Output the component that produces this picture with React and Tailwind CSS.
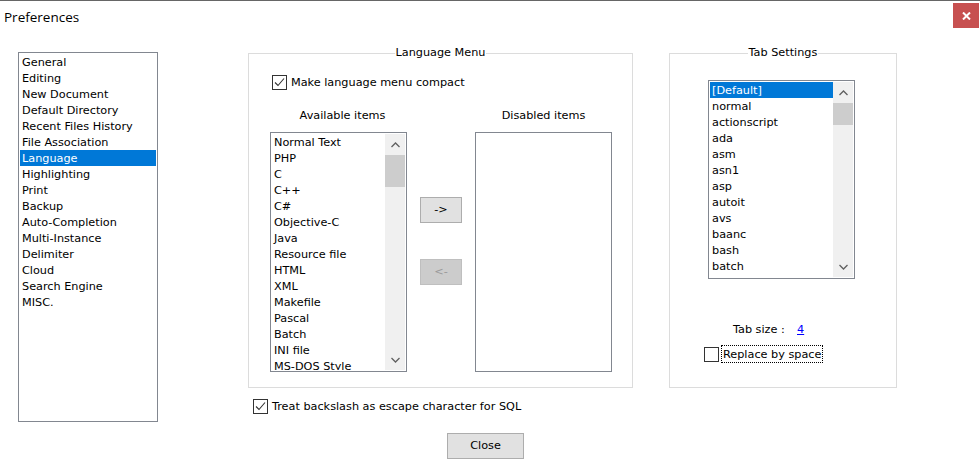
import React from "react";

const prefItems = [
  "General",
  "Editing",
  "New Document",
  "Default Directory",
  "Recent Files History",
  "File Association",
  "Language",
  "Highlighting",
  "Print",
  "Backup",
  "Auto-Completion",
  "Multi-Instance",
  "Delimiter",
  "Cloud",
  "Search Engine",
  "MISC.",
];

const langItems = [
  "Normal Text",
  "PHP",
  "C",
  "C++",
  "C#",
  "Objective-C",
  "Java",
  "Resource file",
  "HTML",
  "XML",
  "Makefile",
  "Pascal",
  "Batch",
  "INI file",
  "MS-DOS Style",
];

const tabItems = [
  "[Default]",
  "normal",
  "actionscript",
  "ada",
  "asm",
  "asn1",
  "asp",
  "autoit",
  "avs",
  "baanc",
  "bash",
  "batch",
  "blitzbasic",
];

function Chevron({ up }) {
  return (
    <svg width="9" height="6" viewBox="0 0 9 6" fill="none" stroke="#606060" strokeWidth="1.3">
      {up ? <polyline points="0.5 5 4.5 1 8.5 5" /> : <polyline points="0.5 1 4.5 5 8.5 1" />}
    </svg>
  );
}

function ScrollBar({ thumb }) {
  return (
    <div className="w-[20px] shrink-0 bg-[#f0f0f0] flex flex-col">
      <div className="h-[21px] flex items-center justify-center">
        <Chevron up />
      </div>
      <div className={`bg-[#cdcdcd] ${thumb}`} />
      <div className="flex-1" />
      <div className="h-[21px] flex items-center justify-center">
        <Chevron />
      </div>
    </div>
  );
}

function ListBox({ items, selected, className, scroll, thumb }) {
  return (
    <div className={`border border-[#828790] p-px flex overflow-hidden bg-white ${className}`}>
      <div className="flex-1 overflow-hidden">
        {items.map((it) => (
          <div
            key={it}
            className={`h-[16px] pt-px leading-[15px] pl-[2px] whitespace-nowrap ${
              it === selected ? "bg-[#0078d7] text-white" : "text-black"
            }`}
          >
            {it}
          </div>
        ))}
      </div>
      {scroll && <ScrollBar thumb={thumb} />}
    </div>
  );
}

function CheckBox({ checked }) {
  return (
    <div className="w-[15px] h-[15px] border border-[#333] bg-white shrink-0">
      {checked && (
        <svg width="13" height="13" viewBox="0 0 13 13" fill="none" stroke="#333" strokeWidth="1.1">
          <polyline points="2 6.5 5 9.5 11 2.5" />
        </svg>
      )}
    </div>
  );
}

function Btn({ children, disabled, className }) {
  return (
    <div
      className={`h-[26px] pt-px flex items-center justify-center border ${
        disabled ? "bg-[#cccccc] border-[#bfbfbf] text-[#9a9a9a]" : "bg-[#e1e1e1] border-[#adadad] text-black"
      } ${className}`}
    >
      {children}
    </div>
  );
}

export default function App() {
  return (
    <div className="w-[980px] h-[472px] bg-white border-t border-[#666] font-['DejaVu_Sans',sans-serif] text-[11.25px] text-black overflow-hidden">
      {/* Title bar */}
      <div className="h-[44px] flex items-start justify-between">
        <div className="pl-[4px] pt-[7px] leading-[18px] text-[13.5px] font-['Open_Sans',sans-serif]">
          Preferences
        </div>
        <div className="mt-[2px] mr-[1px] w-[26px] h-[25px] bg-[#c75050] flex items-center justify-center">
          <svg width="9" height="8" viewBox="0 0 9 8" stroke="white" strokeWidth="2">
            <path d="M1 0.5L8 7.5M8 0.5L1 7.5" />
          </svg>
        </div>
      </div>

      {/* Body */}
      <div className="flex items-start pl-[18px]">
        <ListBox items={prefItems} selected="Language" className="mt-[7px] w-[140px] h-[370px]" />

        {/* Language Menu column */}
        <div className="ml-[90px] flex flex-col">
          <fieldset className="w-[385px] h-[343px] border border-[#dcdcdc]">
            <legend className="mx-auto px-[1px] leading-[16px]">Language Menu</legend>
            <div className="mt-[14px] pl-[23px] flex items-center">
              <CheckBox checked />
              <span className="ml-[4px] leading-[14px] pt-px">Make language menu compact</span>
            </div>
            <div className="mt-[17px] pl-[21px] flex leading-[15px] pt-px">
              <div className="w-[137px] text-center pl-[8px]">Available items</div>
              <div className="w-[68px]" />
              <div className="w-[137px] text-center">Disabled items</div>
            </div>
            <div className="mt-[9px] pl-[21px] flex items-start">
              <ListBox items={langItems} className="w-[137px] h-[240px]" scroll thumb="h-[32px]" />
              <div className="mx-[13px] w-[42px] pt-[65px] flex flex-col">
                <Btn>-&gt;</Btn>
                <Btn disabled className="mt-[36px]">
                  &lt;-
                </Btn>
              </div>
              <div className="w-[137px] h-[240px] border border-[#828790]" />
            </div>
          </fieldset>
          <div className="mt-[11px] pl-[5px] flex items-center">
            <CheckBox checked />
            <span className="ml-[4px] leading-[14px] pt-px">Treat backslash as escape character for SQL</span>
          </div>
        </div>

        {/* Tab Settings */}
        <fieldset className="ml-[36px] w-[228px] h-[343px] border border-[#dcdcdc]">
          <legend className="mx-auto px-[1px] leading-[16px]">Tab Settings</legend>
          <ListBox
            items={tabItems}
            selected="[Default]"
            className="mt-[19px] ml-[38px] w-[147px] h-[199px]"
            scroll
            thumb="h-[22px]"
          />
          <div className="mt-[43px] ml-[63px] flex leading-[16px]">
            <span className="w-[64px]">Tab size :</span>
            <span className="text-[#0000ff] underline">4</span>
          </div>
          <div className="mt-[7px] ml-[34px] flex items-center">
            <CheckBox />
            <span className="ml-[2px] px-[1px] h-[18px] pt-px leading-[15px] border border-dotted border-black">
              Replace by space
            </span>
          </div>
        </fieldset>
      </div>

      <div className="mt-[11px] ml-[447px]">
        <Btn className="w-[77px]">Close</Btn>
      </div>
    </div>
  );
}
